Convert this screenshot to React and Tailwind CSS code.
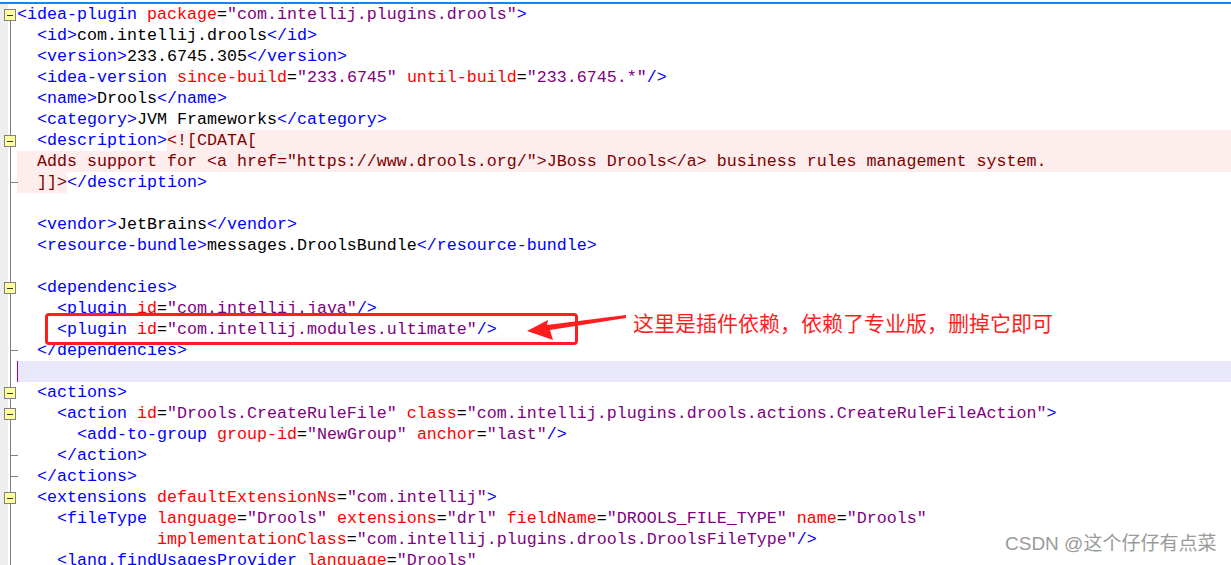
const C = {
  t: 'text-[#0000ff]',
  a: 'text-[#ff0000]',
  s: 'text-[#800080]',
  x: 'text-black',
  c: 'text-[#800000]',
}

const tok = (str) => {
  // quick tokenizer for the few xml shapes in this file
  const out = []
  const re = /(<\/?[\w.-]+|\/?>)|(\s+)([\w-]+)(=)("[^"]*")|([^<>]+)/g
  let m
  while ((m = re.exec(str))) {
    if (m[1]) out.push(['t', m[1]])
    else if (m[3]) {
      out.push(['x', m[2]])
      out.push(['a', m[3]])
      out.push(['x', '='])
      out.push(['s', m[5]])
    } else out.push(['x', m[6]])
  }
  return out
}

const lines = [
  { code: '<idea-plugin package="com.intellij.plugins.drools">', fold: 'first' },
  { code: '  <id>com.intellij.drools</id>' },
  { code: '  <version>233.6745.305</version>' },
  { code: '  <idea-version since-build="233.6745" until-build="233.6745.*"/>' },
  { code: '  <name>Drools</name>' },
  { code: '  <category>JVM Frameworks</category>' },
  { code: '  <description>', fold: 'start', cdata: 'open' },
  { cdata: 'body' },
  { code: '</description>', cdata: 'close', fold: 'end' },
  { code: '' },
  { code: '  <vendor>JetBrains</vendor>' },
  { code: '  <resource-bundle>messages.DroolsBundle</resource-bundle>' },
  { code: '' },
  { code: '  <dependencies>', fold: 'start' },
  { code: '    <plugin id="com.intellij.java"/>' },
  { code: '    <plugin id="com.intellij.modules.ultimate"/>' },
  { code: '  </dependencies>', fold: 'end' },
  { code: '', current: true },
  { code: '  <actions>', fold: 'start' },
  { code: '    <action id="Drools.CreateRuleFile" class="com.intellij.plugins.drools.actions.CreateRuleFileAction">', fold: 'start' },
  { code: '      <add-to-group group-id="NewGroup" anchor="last"/>' },
  { code: '    </action>', fold: 'end' },
  { code: '  </actions>', fold: 'end' },
  { code: '  <extensions defaultExtensionNs="com.intellij">', fold: 'start' },
  { code: '    <fileType language="Drools" extensions="drl" fieldName="DROOLS_FILE_TYPE" name="Drools"' },
  { code: '              implementationClass="com.intellij.plugins.drools.DroolsFileType"/>' },
  { code: '    <lang.findUsagesProvider language="Drools"' },
]

function Gutter({ fold }) {
  const isBox = fold === 'first' || fold === 'start'
  return (
    <div className="relative flex w-[17px] h-full flex-shrink-0">
      <div className="w-[8px] h-full bg-[#eeeeee]" />
      <div className="w-[9px] h-full bg-white" />
      <div className={`absolute left-[10px] bottom-0 w-px bg-[#808080] ${fold === 'first' ? 'top-[10px]' : 'top-0'}`} />
      {fold === 'end' && <div className="absolute left-[10px] top-[10px] w-[8px] h-px bg-[#808080]" />}
      {isBox && (
        <div className="absolute left-[4px] top-[5px] w-[12px] h-[12px] border border-[#808080] bg-[#ffff9f] flex items-center justify-center">
          <div className="w-[6px] h-px bg-[#333]" />
        </div>
      )}
    </div>
  )
}

function Tokens({ code }) {
  return tok(code).map(([k, v], i) => (
    <span key={i} className={C[k]}>{v}</span>
  ))
}

function Row({ line }) {
  let body
  if (line.cdata === 'open') {
    body = (
      <>
        <Tokens code={line.code} />
        <span className={`flex-1 h-full bg-[#fdeded] ${C.c}`}>{'<![CDATA['}</span>
      </>
    )
  } else if (line.cdata === 'body') {
    body = (
      <span className={`flex-1 h-full bg-[#fdeded] ${C.c}`}>
        {'  Adds support for <a href="https://www.drools.org/">JBoss Drools</a> business rules management system.'}
      </span>
    )
  } else if (line.cdata === 'close') {
    body = (
      <>
        <span className={`h-full bg-[#fdeded] ${C.c}`}>{'  ]]>'}</span>
        <Tokens code={line.code} />
      </>
    )
  } else {
    body = <Tokens code={line.code} />
  }

  return (
    <div className="flex h-[21px] items-stretch">
      <Gutter fold={line.fold} />
      <div
        className={`flex-1 flex items-center whitespace-pre leading-[21px] ${
          line.current ? 'bg-[#e8e8fa] border-l border-[#8000ff]' : ''
        }`}
      >
        {body}
      </div>
    </div>
  )
}

export default function App() {
  return (
    <div className="relative w-[1231px] h-[565px] overflow-hidden bg-white font-['Liberation_Mono',monospace] text-[16.67px]">
      <div className="h-[2px] bg-white" />
      <div className="h-[2px] bg-[#1a86e4]" />
      {lines.map((l, i) => (
        <Row key={i} line={l} />
      ))}

      <div className="absolute left-[45px] top-[313px] w-[533px] h-[32px] border-[3px] border-[#ff1e1e] rounded-[4px]" />

      <svg className="absolute left-[520px] top-[308px]" width="112" height="40" viewBox="520 308 112 40">
        <polygon
          points="527,331 548,320 547,325 626,315 626,318 550,330 553,340"
          fill="#ff1e1e"
        />
      </svg>

      <div className="absolute left-[633px] top-[309px] font-['Noto_Sans_CJK_SC',sans-serif] text-[21px] leading-[26px] text-[#ff1e1e] whitespace-nowrap">
        这里是插件依赖，依赖了专业版，删掉它即可
      </div>

      <div className="absolute left-[1005px] top-[531px] font-['Liberation_Sans','Noto_Sans_CJK_SC',sans-serif] text-[19px] leading-[26px] text-[#9a9a9a] whitespace-nowrap">
        CSDN @这个仔仔有点菜
      </div>
    </div>
  )
}
